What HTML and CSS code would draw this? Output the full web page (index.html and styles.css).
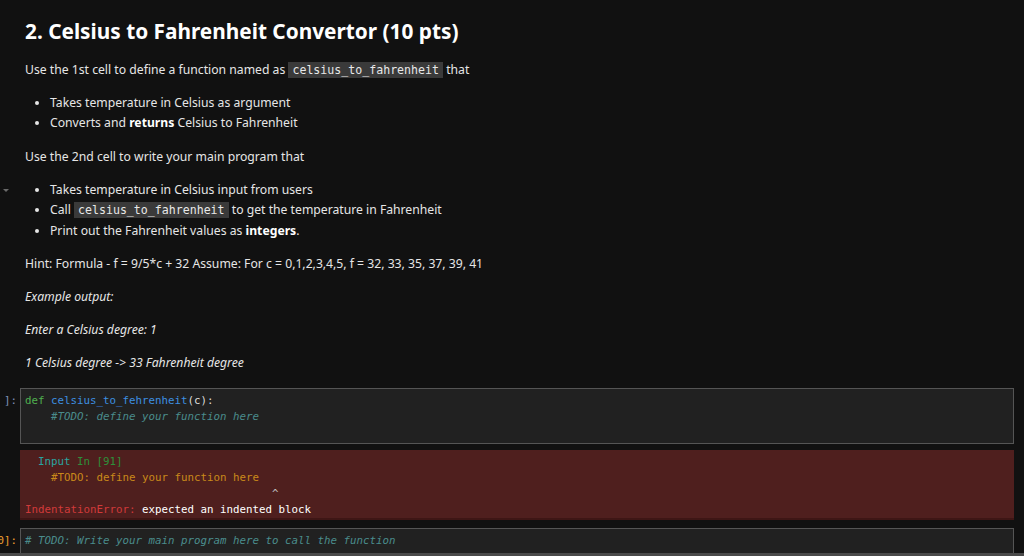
FILE: index.html
```html
<!DOCTYPE html>
<html>
<head>
<meta charset="utf-8">
<link rel="stylesheet" href="styles.css">
</head>
<body>
<div class="notebook">
  <div class="md-cell">
    <span class="collapser"></span>
    <div class="md">
      <h2 class="title">2. Celsius to Fahrenheit Convertor (10 pts)</h2>
      <p class="para">Use the 1st cell to define a function named as <code class="ic">celsius_to_fahrenheit</code> that</p>
      <ul class="list">
        <li>Takes temperature in Celsius as argument</li>
        <li>Converts and <b>returns</b> Celsius to Fahrenheit</li>
      </ul>
      <p class="para">Use the 2nd cell to write your main program that</p>
      <ul class="list">
        <li>Takes temperature in Celsius input from users</li>
        <li>Call <code class="ic">celsius_to_fahrenheit</code> to get the temperature in Fahrenheit</li>
        <li>Print out the Fahrenheit values as <b>integers</b>.</li>
      </ul>
      <p class="para">Hint: Formula - f = 9/5*c + 32 Assume: For c = 0,1,2,3,4,5, f = 32, 33, 35, 37, 39, 41</p>
      <p class="para"><em>Example output:</em></p>
      <p class="para"><em>Enter a Celsius degree: 1</em></p>
      <p class="para"><em>1 Celsius degree -&gt; 33 Fahrenheit degree</em></p>
    </div>
  </div>

  <div class="code-cell">
    <div class="prompt"><span class="p-in">[ ]:</span></div>
    <div class="editor"><pre class="src"><span class="kw">def</span> <span class="fn">celsius_to_fehrenheit</span>(c):
    <span class="cm">#TODO: define your function here</span>
</pre></div>
  </div>

  <div class="output-row">
    <div class="prompt"></div>
    <div class="error"><pre class="src">  <span class="e-input">Input</span> <span class="e-in">In [91]</span>
    <span class="e-line">#TODO: define your function here</span>
                                      <span class="e-caret">^</span>
<span class="e-name">IndentationError:</span> <span class="e-msg">expected an indented block</span></pre></div>
  </div>

  <div class="code-cell last">
    <div class="prompt"><span class="p-run">[90]:</span></div>
    <div class="editor"><pre class="src"><span class="cm"># TODO: Write your main program here to call the function</span></pre></div>
  </div>
</div>
<div class="hscroll"></div>
</body>
</html>
```

FILE: styles.css
```css
html, body {
  margin: 0;
  padding: 0;
  background: #111111;
  height: 556px;
  overflow: hidden;
}

body {
  font-family: "Noto Sans", "Open Sans", sans-serif;
  color: #e6e6e6;
  position: relative;
}

.notebook {
  display: flex;
  flex-direction: column;
}

.md-cell {
  position: relative;
  padding: 17px 10px 0 25px;
}

.collapser {
  position: absolute;
  left: 3px;
  top: 189px;
  width: 0;
  height: 0;
  border-left: 3px solid transparent;
  border-right: 3px solid transparent;
  border-top: 3px solid #6a6a6a;
}

.title {
  margin: 0;
  font-size: 20.8px;
  line-height: 28px;
  font-weight: 700;
  color: #ffffff;
}

.title + .para {
  margin-top: 15px;
}

.para {
  margin: 14px 0 0;
  font-size: 12.2px;
  line-height: 20px;
}

.list {
  margin: 13px 0 0;
  padding-left: 25px;
  font-size: 12.2px;
  line-height: 20.4px;
}

.list + .para {
  margin-top: 13px;
}

.para + .para {
  margin-top: 13px;
}

.md b {
  font-weight: 700;
  color: #ffffff;
}

.ic {
  font-family: "DejaVu Sans Mono", "Liberation Mono", monospace;
  font-size: 11.6px;
  background: #3a3a3a;
  color: #e8e8e8;
  padding: 1px 4px;
}

.code-cell {
  display: flex;
  margin: 15px 10px 0 0;
}

.code-cell.last {
  margin-top: 8px;
}

.output-row {
  display: flex;
  margin: 6px 10px 0 0;
}

.prompt {
  width: 20px;
  flex: none;
  display: flex;
  justify-content: flex-end;
  overflow: hidden;
  font-family: "DejaVu Sans Mono", "Liberation Mono", monospace;
  font-size: 10.8px;
  line-height: 16px;
  padding-top: 5px;
  white-space: nowrap;
}

.p-in {
  color: #7f93b8;
  padding-right: 3px;
}

.p-run {
  color: #f0a030;
  padding-right: 3px;
}

.editor {
  flex: 1;
  background: #212121;
  border: 1px solid #555555;
  padding: 4px 4px 2px;
}

.last .editor {
  padding: 4px;
  border-bottom-color: #3a3a3a;
}

.src {
  margin: 0;
  font-family: "DejaVu Sans Mono", "Liberation Mono", monospace;
  font-size: 10.8px;
  line-height: 16px;
  color: #dddddd;
  white-space: pre;
}

.editor .src {
  min-height: 48px;
}

.last .editor .src {
  min-height: 16px;
}

.kw { color: #4fb04f; }
.fn { color: #3d8fe0; }
.cm { color: #4a8c8c; font-style: italic; }

.error {
  flex: 1;
  background: #4f1f1e;
  border-bottom: 2px solid #3e1615;
  padding: 4px 5px 0;
}

.e-input { color: #2aa5a0; }
.e-in { color: #2e8f3a; }
.e-line { color: #c9891a; }
.e-caret { color: #bdbdbd; }
.e-name { color: #d13a3a; }
.e-msg { color: #ffffff; }

.hscroll {
  position: absolute;
  left: 0;
  right: 0;
  bottom: 0;
  height: 3px;
  background: #4a4a4a;
}
```
